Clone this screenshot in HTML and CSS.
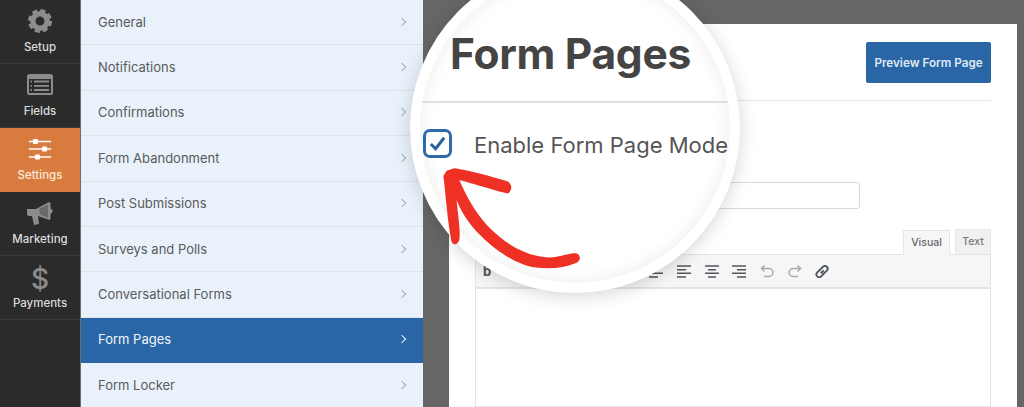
FILE: index.html
```html
<!DOCTYPE html>
<html lang="en">
<head>
<meta charset="utf-8">
<title>Form Pages</title>
<link rel="stylesheet" href="styles.css">
</head>
<body>
<svg class="defs" width="0" height="0" aria-hidden="true">
  <symbol id="i-left" viewBox="0 0 14 13"><path d="M0 1h14M0 4.700h9M0 8.300h14M0 12h9" stroke="currentColor" stroke-width="1.600"/></symbol>
  <symbol id="i-center" viewBox="0 0 14 13"><path d="M0 1h14M3 4.700h8M0 8.300h14M3 12h8" stroke="currentColor" stroke-width="1.600"/></symbol>
  <symbol id="i-right" viewBox="0 0 14 13"><path d="M0 1h14M5 4.700h9M0 8.300h14M5 12h9" stroke="currentColor" stroke-width="1.600"/></symbol>
</svg>
<div class="app">
  <nav class="rail">
    <a class="rail-item">
      <svg class="rail-icon" viewBox="0 0 30 30"><circle cx="15" cy="15" r="7.200" fill="none" stroke="#8c8c8c" stroke-width="5.400"/><circle cx="15" cy="15" r="10.200" fill="none" stroke="#8c8c8c" stroke-width="3.600" stroke-dasharray="5 3.010"/></svg>
      <span>Setup</span>
    </a>
    <a class="rail-item">
      <svg class="rail-icon" viewBox="0 0 30 30"><rect x="2" y="4" width="26" height="21" rx="2.500" fill="#8c8c8c"/><rect x="4" y="9" width="22" height="14" fill="#2b2b2b"/><path d="M9 11.500h15M9 15.800h15M9 20h15" stroke="#8c8c8c" stroke-width="1.800"/><path d="M5.500 11.500h1.500M5.500 15.800h1.500M5.500 20h1.500" stroke="#8c8c8c" stroke-width="1.800"/></svg>
      <span>Fields</span>
    </a>
    <a class="rail-item is-active">
      <svg class="rail-icon" viewBox="0 0 30 30"><path d="M4 7.500h22M4 15h22M4 23h22" stroke="#fff" stroke-width="1.700"/><rect x="8" y="5" width="5" height="5" rx="1" fill="#fff"/><rect x="17" y="12.500" width="5" height="5" rx="1" fill="#fff"/><rect x="10" y="20.500" width="5" height="5" rx="1" fill="#fff"/></svg>
      <span>Settings</span>
    </a>
    <a class="rail-item">
      <svg class="rail-icon" viewBox="0 0 30 30"><path d="M2 11h9l12-6.500 1.500-.5 1 1v5.500c1.500.5 2 1.500 2 2.500s-.5 2.200-2 2.700V21l-1 1-1.500-.5L13 18l1 8-5 1-2-9H4c-1.500 0-2-1-2-2z" fill="#8c8c8c"/><path d="M23 6.500v13.500l-8.500-4v-5.500z" fill="#2b2b2b" opacity=".35"/></svg>
      <span>Marketing</span>
    </a>
    <a class="rail-item">
      <span class="dollar">$</span>
      <span>Payments</span>
    </a>
  </nav>

  <ul class="menu">
    <li class="menu-item">General</li>
    <li class="menu-item">Notifications</li>
    <li class="menu-item">Confirmations</li>
    <li class="menu-item">Form Abandonment</li>
    <li class="menu-item">Post Submissions</li>
    <li class="menu-item">Surveys and Polls</li>
    <li class="menu-item">Conversational Forms</li>
    <li class="menu-item is-active">Form Pages</li>
    <li class="menu-item">Form Locker</li>
  </ul>

  <main class="stage">
    <section class="panel">
      <header class="panel-head"><button class="preview">Preview Form Page</button></header>
      <div class="field"></div>
      <div class="tabs"><span class="tab is-on">Visual</span><span class="tab">Text</span></div>
      <div class="toolbar">
        <b class="tool-b">b</b>
        <i class="tool-slot"></i><i class="tool-slot"></i><i class="tool-slot"></i><i class="tool-slot"></i><i class="tool-slot"></i>
        <svg class="tool"><use href="#i-left"/></svg>
        <svg class="tool"><use href="#i-left"/></svg>
        <svg class="tool"><use href="#i-center"/></svg>
        <svg class="tool"><use href="#i-right"/></svg>
        <svg class="tool muted" viewBox="0 0 14 13"><path d="M1.500 3.500h7.500a3.800 3.800 0 0 1 0 8H4M4.500 .5l-3 3 3 3" fill="none" stroke="currentColor" stroke-width="1.500"/></svg>
        <svg class="tool muted" viewBox="0 0 14 13"><path d="M12.500 3.500H5a3.800 3.800 0 0 0 0 8h5M9.500 .5l3 3-3 3" fill="none" stroke="currentColor" stroke-width="1.500"/></svg>
        <svg class="tool" viewBox="1.500 1.500 11 11"><path d="M6 8.500 8.500 6M5.500 5.500 7.800 3a2.400 2.400 0 0 1 3.300 0 2.400 2.400 0 0 1 0 3.300L8.500 8.800M5.500 5.300 3 7.800a2.400 2.400 0 0 0 0 3.300 2.400 2.400 0 0 0 3.300 0l2.300-2.400" fill="none" stroke="currentColor" stroke-width="1.600"/></svg>
      </div>
      <div class="editor"></div>
    </section>
  </main>
</div>

<aside class="lens">
  <div class="lens-inner">
    <h1>Form Pages</h1>
    <div class="lens-row">
      <span class="check"><svg viewBox="0 0 20 20"><path d="M3 10.500 8 15.500 17 4" fill="none" stroke="#2a5f9e" stroke-width="3.200"/></svg></span>
      <span class="lens-label">Enable Form Page Mode</span>
    </div>
  </div>
</aside>

<svg class="arrow" viewBox="0 0 540 510"><path fill="#ee3124" d="M70 168 80 152 102 145C140 150 180 160 262 184 276 190 278 208 266 220 255 222 180 196 118 180 135 220 165 280 210 325 270 385 340 415 400 412 430 408 450 398 468 400 482 404 484 420 470 428 430 445 390 448 340 442 280 430 220 385 180 345 150 315 125 280 110 240 114 290 122 330 118 360 112 376 100 378 94 362 82 300 78 230 70 168Z"/></svg>
</body>
</html>
```

FILE: styles.css
```css
* { box-sizing: border-box; }
html, body { margin: 0; height: 407px; overflow: hidden; }
body { font-family: Inter, "Liberation Sans", sans-serif; position: relative; background: #666; }
.defs { position: absolute; }

.app { display: flex; height: 407px; overflow: hidden; }

/* left rail */
.rail { width: 81px; flex: none; background: #2b2b2b; border-right: 1px solid #6d6d6d; }
.rail-item { height: 64px; display: flex; flex-direction: column; align-items: center; padding-top: 6px; border-bottom: 1px solid #3a3a3a; color: #dcdcdc; font-size: 11.500px; font-weight: 500; line-height: 14px; }
.rail-item.is-active { background: #d87b3e; color: #fbe9dc; border-bottom-color: #d87b3e; }
.rail-icon { width: 30px; height: 30px; margin-bottom: 4px; display: block; flex: none; }
.dollar { height: 34px; flex: none; color: #8c8c8c; font-size: 28px; line-height: 34px; font-weight: 500; }

/* settings menu */
.menu { width: 342px; flex: none; margin: 0; padding: 0; list-style: none; background: #e9f2fb; }
.menu-item { height: 45.400px; display: flex; align-items: center; justify-content: space-between; padding: 0 18px 1px 17px; border-bottom: 1.500px solid #dbe3eb; color: #5a5a5a; font-size: 13px; }
.menu-item::after { content: ""; width: 5px; height: 5px; border-top: 1px solid #a9adb1; border-right: 1px solid #a9adb1; transform: rotate(45deg); }
.menu-item.is-active { background: #2a66a6; color: #f1f5fa; border-bottom-color: #2a66a6; }
.menu-item.is-active::after { border-color: #e4ecf5; }

/* main panel */
.stage { flex: 1; padding: 24px 7px 0 26px; background: #666; }
.panel { height: 383px; background: #fff; padding: 18px 26px 0; display: flex; flex-direction: column; }
.panel-head { display: flex; justify-content: flex-end; height: 59px; padding-bottom: 17px; border-bottom: 1px solid #e2e6ea; flex: none; }
.preview { width: 125px; height: 41px; border: 0; border-radius: 2px; padding: 0; background: #2a66a6; color: #dfe9f4; font: 600 11.700px Inter, "Liberation Sans", sans-serif; }
.field { width: 385px; height: 27px; margin-top: 81px; flex: none; border: 1px solid #d5d9de; border-radius: 3px; }
.tabs { display: flex; justify-content: flex-end; gap: 5px; margin-top: 20px; height: 25px; flex: none; }
.tab { width: 36px; padding-bottom: 1px; display: flex; align-items: center; justify-content: center; border: 1px solid #e6e6e6; border-bottom: 0; background: #f1f1f1; color: #777; font-size: 10.500px; font-weight: 500; }
.tab.is-on { width: 47px; background: #f6f6f6; position: relative; top: 1px; color: #666; }
.toolbar { height: 35px; flex: none; display: flex; align-items: center; gap: 13.700px; padding-left: 7px; border: 1px solid #e4e4e4; border-bottom-width: 2px; background: #f6f6f6; color: #50575e; }
.tool { width: 14px; height: 13px; flex: none; }
.tool.muted { color: #a7aaad; }
.tool-b { width: 14px; flex: none; font-size: 13px; }
.tool-slot { width: 14px; flex: none; }
.editor { flex: 1; border: 1px solid #e4e4e4; border-top: 0; }

/* magnifier */
.lens { position: absolute; left: 410px; top: -37px; width: 330px; height: 330px; border-radius: 50%; border: 10px solid #fff; background: #fff; box-shadow: 0 3px 18px rgba(0,0,0,.17); }
.lens-inner { width: 310px; height: 310px; border-radius: 50%; overflow: hidden; padding-top: 55px; box-shadow: inset 0 0 18px rgba(0,0,0,.08); }
.lens-inner h1 { margin: 0; height: 75px; padding-left: 30px; border-bottom: 2px solid #dcdfe3; color: #444; font-size: 42.500px; font-weight: 700; line-height: 52px; letter-spacing: -.3px; }
.lens-row { display: flex; align-items: center; gap: 22px; margin-top: 26px; padding-left: 3px; }
.check { width: 29px; height: 29px; flex: none; border: 3px solid #2e69ab; border-radius: 7px; background: #fff; display: flex; align-items: center; justify-content: center; }
.check svg { width: 19px; height: 19px; }
.lens-label { padding-top: 3px; color: #555; font-size: 22px; white-space: nowrap; }

.arrow { position: absolute; left: 420px; top: 120px; width: 180px; height: 170px; }
```
